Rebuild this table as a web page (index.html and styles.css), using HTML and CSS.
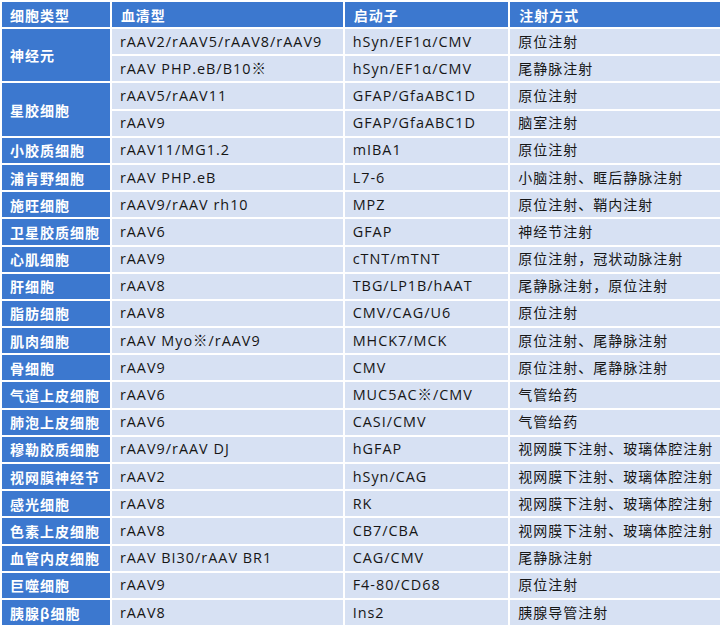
FILE: index.html
```html
<!DOCTYPE html>
<html lang="zh">
<head>
<meta charset="utf-8">
<link rel="stylesheet" href="styles.css">
</head>
<body>
<table class="aav">
  <colgroup>
    <col class="c1"><col class="c2"><col class="c3"><col class="c4">
  </colgroup>
  <thead>
    <tr><th>细胞类型</th><th>血清型</th><th>启动子</th><th>注射方式</th></tr>
  </thead>
  <tbody>
    <tr><th rowspan="2">神经元</th><td>rAAV2/rAAV5/rAAV8/rAAV9</td><td>hSyn/EF1α/CMV</td><td>原位注射</td></tr>
    <tr><td>rAAV PHP.eB/B10※</td><td>hSyn/EF1α/CMV</td><td>尾静脉注射</td></tr>
    <tr><th rowspan="2">星胶细胞</th><td>rAAV5/rAAV11</td><td>GFAP/GfaABC1D</td><td>原位注射</td></tr>
    <tr><td>rAAV9</td><td>GFAP/GfaABC1D</td><td>脑室注射</td></tr>
    <tr><th>小胶质细胞</th><td>rAAV11/MG1.2</td><td>mIBA1</td><td>原位注射</td></tr>
    <tr><th>浦肯野细胞</th><td>rAAV PHP.eB</td><td>L7-6</td><td>小脑注射、眶后静脉注射</td></tr>
    <tr><th>施旺细胞</th><td>rAAV9/rAAV rh10</td><td>MPZ</td><td>原位注射、鞘内注射</td></tr>
    <tr><th>卫星胶质细胞</th><td>rAAV6</td><td>GFAP</td><td>神经节注射</td></tr>
    <tr><th>心肌细胞</th><td>rAAV9</td><td>cTNT/mTNT</td><td>原位注射，冠状动脉注射</td></tr>
    <tr><th>肝细胞</th><td>rAAV8</td><td>TBG/LP1B/hAAT</td><td>尾静脉注射，原位注射</td></tr>
    <tr><th>脂肪细胞</th><td>rAAV8</td><td>CMV/CAG/U6</td><td>原位注射</td></tr>
    <tr><th>肌肉细胞</th><td>rAAV Myo※/rAAV9</td><td>MHCK7/MCK</td><td>原位注射、尾静脉注射</td></tr>
    <tr><th>骨细胞</th><td>rAAV9</td><td>CMV</td><td>原位注射、尾静脉注射</td></tr>
    <tr><th>气道上皮细胞</th><td>rAAV6</td><td>MUC5AC※/CMV</td><td>气管给药</td></tr>
    <tr><th>肺泡上皮细胞</th><td>rAAV6</td><td>CASI/CMV</td><td>气管给药</td></tr>
    <tr><th>穆勒胶质细胞</th><td>rAAV9/rAAV DJ</td><td>hGFAP</td><td>视网膜下注射、玻璃体腔注射</td></tr>
    <tr><th>视网膜神经节</th><td>rAAV2</td><td>hSyn/CAG</td><td>视网膜下注射、玻璃体腔注射</td></tr>
    <tr><th>感光细胞</th><td>rAAV8</td><td>RK</td><td>视网膜下注射、玻璃体腔注射</td></tr>
    <tr><th>色素上皮细胞</th><td>rAAV8</td><td>CB7/CBA</td><td>视网膜下注射、玻璃体腔注射</td></tr>
    <tr><th>血管内皮细胞</th><td>rAAV BI30/rAAV BR1</td><td>CAG/CMV</td><td>尾静脉注射</td></tr>
    <tr><th>巨噬细胞</th><td>rAAV9</td><td>F4-80/CD68</td><td>原位注射</td></tr>
    <tr><th>胰腺β细胞</th><td>rAAV8</td><td>Ins2</td><td>胰腺导管注射</td></tr>
  </tbody>
</table>
</body>
</html>
```

FILE: styles.css
```css
html, body {
  margin: 0;
  padding: 0;
  background: #ffffff;
  overflow: hidden;
}

.aav {
  table-layout: fixed;
  width: 725px;
  border-collapse: separate;
  border-spacing: 2.5px 2px;
  font-family: "Open Sans", "Noto Sans CJK SC", sans-serif;
  font-size: 14px;
  letter-spacing: 1px;
  color: #161616;
}

.c1 { width: 107.5px; }
.c2 { width: 230px; }
.c3 { width: 163px; }
.c4 { width: 212px; }

.aav th,
.aav td {
  padding: 0 0 0 8px;
  text-align: left;
  vertical-align: middle;
  white-space: nowrap;
  overflow: hidden;
  line-height: 18px;
}

.aav td {
  height: 25.2px;
  background: #d7e1f3;
  font-weight: 400;
  font-size: 14.4px;
}

.aav td:last-child {
  font-size: 14px;
}

.aav th {
  background: #3c78cf;
  color: #ffffff;
  font-family: "Noto Sans CJK SC", sans-serif;
  font-weight: 700;
}

.aav thead th {
  height: 25px;
}

.aav thead th + th {
  padding-left: 9px;
}
```
